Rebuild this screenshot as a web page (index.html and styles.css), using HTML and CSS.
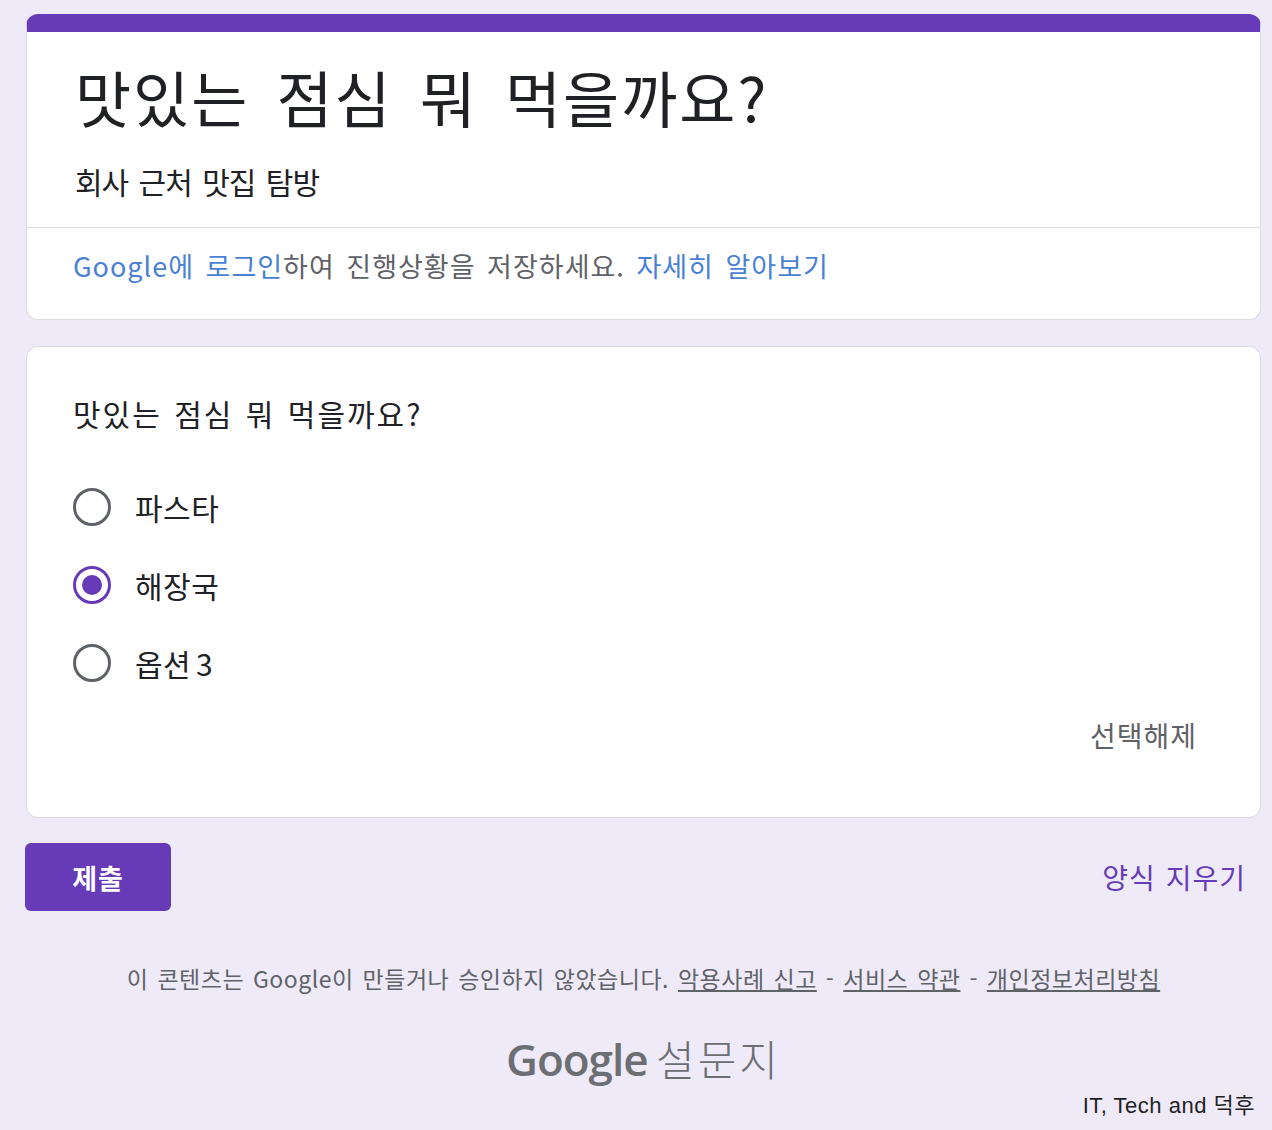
FILE: index.html
```html
<!DOCTYPE html>
<html lang="ko">
<head>
    <meta charset="UTF-8">
    <meta name="viewport" content="width=device-width, initial-scale=1.0">
    <title>맛있는 점심 뭐 먹을까요?</title>
    <link rel="stylesheet" href="styles.css">
</head>
<body>
    <div class="container">
        <div class="card header-card">
            <div class="header-main">
                <h1 class="form-title">맛있는 점심 뭐 먹을까요?</h1>
                <div class="form-desc">회사 근처 맛집 탐방</div>
            </div>
            <div class="signin">
                <a href="#">Google에 로그인</a>하여 진행상황을 저장하세요. <a href="#">자세히 알아보기</a>
            </div>
        </div>

        <div class="card question-card">
            <div class="question-title">맛있는 점심 뭐 먹을까요?</div>
            <div class="options">
                <label class="option">
                    <span class="radio"></span>
                    <span class="option-text">파스타</span>
                </label>
                <label class="option">
                    <span class="radio checked"></span>
                    <span class="option-text">해장국</span>
                </label>
                <label class="option">
                    <span class="radio"></span>
                    <span class="option-text">옵션 3</span>
                </label>
            </div>
            <div class="clear-choice">선택해제</div>
        </div>

        <div class="actions">
            <button class="submit" type="button">제출</button>
            <a class="clear-form" href="#">양식 지우기</a>
        </div>

        <div class="notice">
            이 콘텐츠는 Google이 만들거나 승인하지 않았습니다. <a href="#">악용사례 신고</a> - <a href="#">서비스 약관</a> - <a href="#">개인정보처리방침</a>
        </div>

        <div class="brand">
            <span class="brand-google">Google</span>
            <span class="brand-forms">설문지</span>
        </div>

        <div class="watermark">IT, Tech and 덕후</div>
    </div>
</body>
</html>
```

FILE: styles.css
```css
body {
    font-family: "Noto Sans CJK KR", "Noto Sans", sans-serif;
    background-color: #efeaf8;
    margin: 0;
    padding: 0;
    color: #202124;
}

.container {
    width: 1235px;
    margin-left: 26px;
    padding-top: 14px;
}

.card {
    background-color: #fff;
    border: 1px solid #dadce0;
    border-radius: 12px;
    box-sizing: border-box;
}

.header-card {
    border-top: 18px solid #673ab7;
    height: 306px;
}

.header-main {
    padding: 25px 48px 26px;
    border-bottom: 1px solid #dadce0;
}

.form-title {
    margin: 0;
    font-size: 61px;
    font-weight: 400;
    line-height: 80px;
    letter-spacing: 2px;
    word-spacing: 8px;
    color: #202124;
}

.form-desc {
    margin-top: 24px;
    font-size: 30px;
    line-height: 40px;
    letter-spacing: -1px;
    word-spacing: 3px;
    color: #202124;
}

.signin {
    padding: 20px 46px 0;
    font-size: 27px;
    line-height: 36px;
    letter-spacing: 1px;
    word-spacing: 3px;
    color: #5f6368;
}

.signin a {
    color: #4a7fd6;
    text-decoration: none;
}

.question-card {
    margin-top: 26px;
    height: 472px;
    padding: 46px 48px 0 46px;
}

.question-title {
    font-size: 30px;
    line-height: 40px;
    letter-spacing: 2px;
    word-spacing: 2px;
    color: #202124;
}

.options {
    margin-top: 35px;
}

.option {
    display: flex;
    align-items: center;
    height: 78px;
}

.radio {
    width: 38px;
    height: 38px;
    box-sizing: border-box;
    border: 3px solid #5f6368;
    border-radius: 50%;
    display: flex;
    align-items: center;
    justify-content: center;
    margin-right: 24px;
}

.radio.checked {
    border-color: #673ab7;
}

.radio.checked::after {
    content: "";
    width: 20px;
    height: 20px;
    border-radius: 50%;
    background-color: #673ab7;
}

.option-text {
    font-size: 30px;
    line-height: 40px;
    letter-spacing: 0.5px;
    word-spacing: -4px;
    color: #202124;
}

.clear-choice {
    margin-top: 15px;
    padding-right: 15px;
    text-align: right;
    font-size: 28px;
    line-height: 36px;
    letter-spacing: 1px;
    color: #5f6368;
}

.actions {
    display: flex;
    justify-content: space-between;
    align-items: center;
    margin-top: 25px;
    margin-left: -1px;
}

.submit {
    width: 146px;
    height: 68px;
    border: none;
    border-radius: 6px;
    background-color: #673ab7;
    color: #fff;
    font-family: inherit;
    font-size: 27px;
    font-weight: 700;
    letter-spacing: 1px;
    cursor: pointer;
}

.clear-form {
    padding-right: 15px;
    font-size: 28px;
    letter-spacing: 1px;
    word-spacing: 1px;
    color: #673ab7;
    text-decoration: none;
}

.notice {
    margin-top: 52px;
    text-align: center;
    font-size: 23px;
    line-height: 30px;
    letter-spacing: 0.5px;
    word-spacing: 2px;
    color: #5f6368;
}

.notice a {
    color: #5f6368;
}

.brand {
    margin-top: 37px;
    text-align: center;
    line-height: 56px;
    color: #6b6e72;
}

.brand-google {
    font-family: "Open Sans", Roboto, sans-serif;
    font-size: 44px;
    font-weight: 600;
    letter-spacing: -1px;
}

.brand-forms {
    margin-left: 4px;
    font-size: 42px;
    font-weight: 300;
    letter-spacing: 3px;
}

.watermark {
    margin-top: -4px;
    padding-right: 6px;
    text-align: right;
    font-family: "Liberation Sans", "Noto Sans CJK KR", sans-serif;
    font-size: 22px;
    line-height: 26px;
    letter-spacing: 0.5px;
    color: #222;
}
```
